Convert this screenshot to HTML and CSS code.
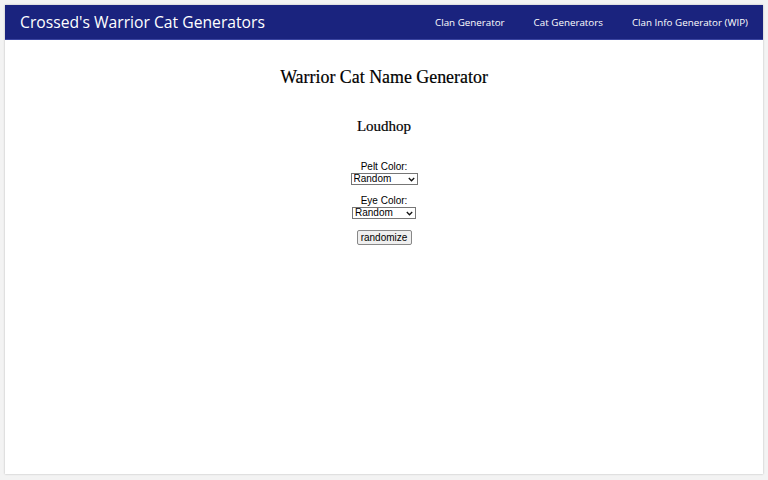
FILE: index.html
```html
<!DOCTYPE html>
<html>
<head>
<meta charset="utf-8">
<link rel="stylesheet" href="styles.css">
</head>
<body>
<div class="page">
  <nav class="nav">
    <div class="brand">Crossed's Warrior Cat Generators</div>
    <div class="links">
      <a href="#">Clan Generator</a>
      <a href="#">Cat Generators</a>
      <a href="#">Clan Info Generator (WIP)</a>
    </div>
  </nav>
  <main class="content">
    <h1 class="title">Warrior Cat Name Generator</h1>
    <h2 class="name">Loudhop</h2>
    <form class="form">
      <div class="field">
        <span class="lbl">Pelt Color:</span>
        <span class="selwrap sel-pelt">
          <select class="sel"><option>Random</option></select>
          <svg class="chev" width="7" height="5" viewBox="0 0 7 5"><path d="M0.8 1 L3.5 3.8 L6.2 1" fill="none" stroke="#111" stroke-width="1.3"/></svg>
        </span>
      </div>
      <div class="field">
        <span class="lbl">Eye Color:</span>
        <span class="selwrap sel-eye">
          <select class="sel"><option>Random</option></select>
          <svg class="chev" width="7" height="5" viewBox="0 0 7 5"><path d="M0.8 1 L3.5 3.8 L6.2 1" fill="none" stroke="#111" stroke-width="1.3"/></svg>
        </span>
      </div>
      <button type="button" class="btn">randomize</button>
    </form>
  </main>
</div>
</body>
</html>
```

FILE: styles.css
```css
html, body {
  margin: 0;
  padding: 0;
  height: 100%;
}
body {
  background: #f3f3f3;
  padding: 5px 5px 6px 5px;
  box-sizing: border-box;
}
.page {
  height: 100%;
  background: #ffffff;
  box-shadow: 0 0 2px rgba(0,0,0,0.25);
  display: flex;
  flex-direction: column;
}
.nav {
  height: 34px;
  background: #1a237e;
  border-bottom: 1px solid #3a44a0;
  display: flex;
  align-items: center;
  justify-content: space-between;
  padding: 0 15px;
  font-family: "Open Sans", sans-serif;
  color: #fff;
}
.brand {
  font-size: 15.7px;
  color: #fff;
}
.links {
  display: flex;
  gap: 29px;
  padding-top: 1px;
}
.links a {
  color: #fff;
  text-decoration: none;
  font-size: 9.8px;
}
.content {
  flex: 1;
  display: flex;
  flex-direction: column;
  align-items: center;
  font-family: "Liberation Serif", serif;
}
.title {
  font-size: 17.9px;
  font-weight: normal;
  margin: 27px 0 0 0;
  color: #000;
  -webkit-text-stroke: 0.2px #000;
}
.name {
  font-size: 15px;
  font-weight: normal;
  margin: 30px 0 0 0;
  color: #000;
  -webkit-text-stroke: 0.2px #000;
}
.form {
  margin-top: 26px;
  display: flex;
  flex-direction: column;
  align-items: center;
  font-family: "Liberation Sans", sans-serif;
  font-size: 10px;
  line-height: 12px;
  color: #000;
}
.field {
  display: flex;
  flex-direction: column;
  align-items: center;
  margin-bottom: 10px;
}
.lbl {
  color: #000;
}
.selwrap {
  position: relative;
  display: block;
  height: 12px;
}
.sel {
  -webkit-appearance: none;
  appearance: none;
  font-family: "Liberation Sans", sans-serif;
  font-size: 10px;
  line-height: 10px;
  width: 100%;
  height: 12px;
  padding: 0 0 0 2px;
  margin: 0;
  border: 1px solid #767676;
  border-radius: 0;
  background: #fff;
  color: #000;
  display: block;
  box-sizing: border-box;
}
.chev {
  position: absolute;
  right: 3px;
  top: 4px;
  pointer-events: none;
}
.sel-pelt { width: 67px; }
.sel-eye { width: 64px; }
.btn {
  font-family: "Liberation Sans", sans-serif;
  font-size: 10px;
  height: 15px;
  width: 55px;
  padding: 0;
  margin-top: 1px;
  border: 1px solid #888;
  border-radius: 2px;
  background: #efefef;
  color: #000;
}
```
